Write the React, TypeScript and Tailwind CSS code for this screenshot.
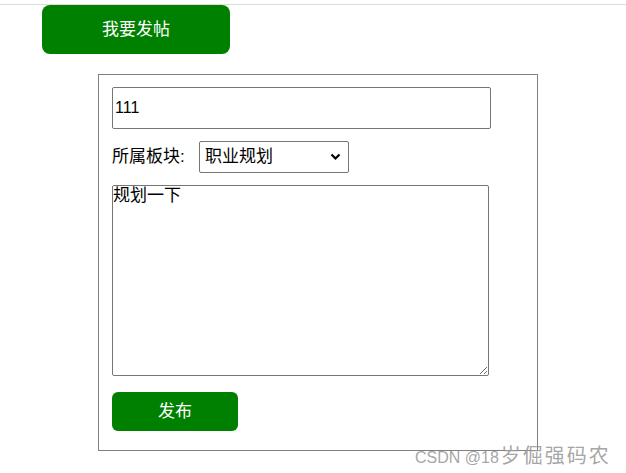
import { useState } from "react";

const font = { fontFamily: '"Liberation Sans", "Noto Sans CJK SC", sans-serif' };

export default function App() {
  const [title, setTitle] = useState("111");
  const [board, setBoard] = useState("职业规划");
  const [content, setContent] = useState("规划一下");

  return (
    <div className="relative h-[473px] w-[626px] overflow-hidden bg-white text-black" style={font}>
      <div className="h-[5px] border-b border-[#dcdcdc]" />

      <button className="ml-[42px] flex h-[49px] w-[188px] items-center justify-center rounded-lg bg-[#008000] text-[17px] text-white">
        我要发帖
      </button>

      <form
        className="mt-[20px] ml-[98px] flex h-[377px] w-[440px] flex-col border border-[#808080] px-[13px] pt-[12px]"
        onSubmit={(e) => e.preventDefault()}
      >
        <input
          value={title}
          onChange={(e) => setTitle(e.target.value)}
          className="h-[42px] w-[379px] rounded-[2px] border border-[#767676] px-[2px] text-base outline-none"
        />

        <div className="mt-[12px] flex items-center">
          <label className="w-[87px] text-[17px]">所属板块:</label>
          <div className="relative">
            <select
              value={board}
              onChange={(e) => setBoard(e.target.value)}
              className="h-[32px] w-[150px] appearance-none rounded-[2px] border border-[#767676] bg-white pl-[5px] text-[17px] outline-none"
            >
              <option>职业规划</option>
              <option>技术交流</option>
              <option>求职面试</option>
            </select>
            <svg
              className="pointer-events-none absolute top-[12px] right-[8px]"
              width="11"
              height="8"
              viewBox="0 0 11 8"
            >
              <path d="M1.5 1.5 L5.5 5.5 L9.5 1.5" fill="none" stroke="#000" strokeWidth="2.2" />
            </svg>
          </div>
        </div>

        <textarea
          value={content}
          onChange={(e) => setContent(e.target.value)}
          className="mt-[12px] h-[191px] w-[377px] rounded-[2px] border border-[#767676] p-0 text-[17px] leading-[19px] outline-none"
        />

        <button
          type="submit"
          className="mt-[16px] flex h-[39px] w-[126px] items-center justify-center rounded-md bg-[#008000] text-[17px] text-white"
        >
          发布
        </button>
      </form>

      <div className="absolute top-[441px] left-[415px] flex items-baseline text-base text-[#9a9a9a]/90">
        <span>CSDN @18</span>
        <span className="ml-[2px] text-[20px] tracking-[2px]">岁倔强码农</span>
      </div>
    </div>
  );
}
